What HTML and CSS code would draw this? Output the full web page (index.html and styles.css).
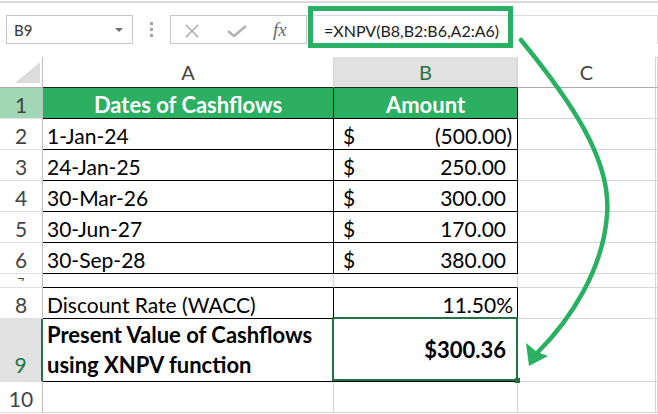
FILE: index.html
```html
<!DOCTYPE html>
<html lang="en">
<head>
<meta charset="utf-8">
<title>XNPV</title>
<link rel="stylesheet" href="styles.css">
</head>
<body>
<div class="app">
  <div class="ribbon-edge"></div>
  <div class="fbar">
    <div class="namebox"><span class="ref">B9</span><span class="caret"></span></div>
    <div class="grip"><i></i><i></i><i></i></div>
    <div class="fbtns">
      <svg class="ico-x" width="14" height="14" viewBox="0 0 14 14"><path d="M1 1 L13 13 M13 1 L1 13" fill="none" stroke="#a3a3a3" stroke-width="1.4"/></svg>
      <svg class="ico-check" width="20" height="12" viewBox="0 0 20 12"><path d="M1 6 L7 11 L19 1" fill="none" stroke="#b3b3b3" stroke-width="2.6"/></svg>
      <span class="fx">fx</span>
    </div>
    <div class="finput">=XNPV(B8,B2:B6,A2:A6)</div>
  </div>

  <div class="sheet">
    <!-- header -->
    <div class="c ch corner"><svg width="26" height="22" viewBox="0 0 26 22"><path d="M0 21 L25 21 L25 0 Z" fill="#dcdcdc"/></svg></div>
    <div class="c ch edge">A</div>
    <div class="c ch edge sel">B</div>
    <div class="c ch">C</div>
    <div class="c ch"></div>

    <!-- row 1 -->
    <div class="c rh tint">1</div>
    <div class="c hd bk">Dates of Cashflows</div>
    <div class="c hd bk">Amount</div>
    <div class="c"></div>
    <div class="c"></div>

    <!-- row 2 -->
    <div class="c rh">2</div>
    <div class="c ta bk">1-Jan-24</div>
    <div class="c amt bk"><span>$</span><span class="neg">(500.00)</span></div>
    <div class="c"></div>
    <div class="c"></div>

    <!-- row 3 -->
    <div class="c rh">3</div>
    <div class="c ta bk">24-Jan-25</div>
    <div class="c amt bk"><span>$</span><span>250.00</span></div>
    <div class="c"></div>
    <div class="c"></div>

    <!-- row 4 -->
    <div class="c rh">4</div>
    <div class="c ta bk">30-Mar-26</div>
    <div class="c amt bk"><span>$</span><span>300.00</span></div>
    <div class="c"></div>
    <div class="c"></div>

    <!-- row 5 -->
    <div class="c rh">5</div>
    <div class="c ta bk">30-Jun-27</div>
    <div class="c amt bk"><span>$</span><span>170.00</span></div>
    <div class="c"></div>
    <div class="c"></div>

    <!-- row 6 -->
    <div class="c rh">6</div>
    <div class="c ta bk">30-Sep-28</div>
    <div class="c amt bk"><span>$</span><span>380.00</span></div>
    <div class="c"></div>
    <div class="c"></div>

    <!-- row 7 -->
    <div class="c rh short"><span>7</span></div>
    <div class="c bk-b"></div>
    <div class="c bk-b"></div>
    <div class="c"></div>
    <div class="c"></div>

    <!-- row 8 -->
    <div class="c rh">8</div>
    <div class="c ta bk">Discount Rate (WACC)</div>
    <div class="c pct bk">11.50%</div>
    <div class="c"></div>
    <div class="c"></div>

    <!-- row 9 -->
    <div class="c rh rsel">9</div>
    <div class="c ta two bk">Present Value of Cashflows<br>using XNPV function</div>
    <div class="c result bk">$300.36</div>
    <div class="c"></div>
    <div class="c"></div>

    <!-- row 10 -->
    <div class="c rh">10</div>
    <div class="c"></div>
    <div class="c"></div>
    <div class="c"></div>
    <div class="c"></div>
  </div>

  <div class="fx-callout"></div>
  <svg class="arrow" width="658" height="414" viewBox="0 0 658 414">
    <path d="M521 40 C570 100 612 160 607 215 C603 270 570 320 538 352" fill="none" stroke="#29b062" stroke-width="4.5" stroke-linecap="round"/>
    <path d="M529 366 L526 343 L537 352 L548 356 Z" fill="#29b062"/>
  </svg>
</div>
</body>
</html>
```

FILE: styles.css
```css
html, body {
  margin: 0;
  padding: 0;
  background: #ffffff;
}

.app {
  position: relative;
  width: 658px;
  height: 414px;
  overflow: hidden;
  font-family: "Lato", "Liberation Sans", sans-serif;
  color: #000;
}

.ribbon-edge {
  height: 2px;
  margin-top: 1px;
  background: #d9d9d9;
}

/* formula bar */
.fbar {
  display: flex;
  height: 29px;
  margin-top: 12px;
}

.namebox {
  box-sizing: border-box;
  width: 127px;
  margin-left: 6px;
  border: 1px solid #c6c6c6;
  display: flex;
  align-items: center;
  justify-content: space-between;
  padding: 0 9px 0 7px;
  font-size: 15px;
  color: #333;
}

.caret {
  width: 0;
  height: 0;
  border-left: 4px solid transparent;
  border-right: 4px solid transparent;
  border-top: 4px solid #6d6d6d;
}

.grip {
  width: 37px;
  display: flex;
  flex-direction: column;
  align-items: center;
  justify-content: center;
  gap: 3px;
}

.grip i {
  display: block;
  width: 3px;
  height: 3px;
  background: #a6a6a6;
}

.fbtns {
  box-sizing: border-box;
  width: 137px;
  border: 1px solid #c6c6c6;
  display: flex;
  align-items: center;
  padding-left: 14px;
}

.ico-x { margin-top: 2px; }
.ico-check { margin-left: 28px; margin-top: 3px; }

.fx {
  margin-left: 26px;
  font-family: "Liberation Serif", "DejaVu Serif", serif;
  font-style: italic;
  font-size: 19px;
  color: #6a6a6a;
}

.finput {
  flex: 1;
  box-sizing: border-box;
  border-top: 1px solid #dadada;
  border-right: 1px solid #dadada;
  display: flex;
  align-items: center;
  padding-left: 17px;
  font-size: 16px;
  color: #222;
}

/* sheet grid */
.sheet {
  display: grid;
  grid-template-columns: 43px 291px 184px 138px 1fr;
  grid-template-rows: 31px repeat(6, 31px) 14px 31px 63px 31px 1fr;
  margin-top: 13px;
  height: 357px;
  font-size: 21px;
}

.c {
  box-sizing: border-box;
  border-right: 1px solid #d4d4d4;
  border-bottom: 1px solid #d4d4d4;
  display: flex;
  align-items: flex-end;
  overflow: hidden;
  white-space: nowrap;
  line-height: 26px;
}

.ch {
  align-items: center;
  justify-content: center;
  font-size: 20px;
  color: #444;
  border-bottom-color: #ababab;
  border-right-color: #d4d4d4;
}

.ch.edge { border-bottom-color: #222; }

.ch.sel {
  background: #e1e1e1;
  color: #217346;
}

.corner {
  justify-content: flex-end;
  align-items: flex-end;
  padding: 0 1px 3px 0;
  border-right-color: #bdbdbd;
}

.corner svg { display: block; }

.rh {
  justify-content: center;
  color: #444;
  border-right-color: #bdbdbd;
  border-bottom-color: #e1e1e1;
}

.rh.short {
  line-height: 13px;
  font-size: 12px;
}

.rh.short span {
  display: block;
  height: 6px;
  overflow: hidden;
  margin-bottom: 6px;
}

.rh.tint { background: #a2d7b6; }

.rh.rsel {
  background: #e1e1e1;
  color: #217346;
  border-right: 2px solid #217346;
  line-height: 30px;
  padding-bottom: 1px;
}

.bk {
  border-right-color: #000;
  border-bottom-color: #000;
}

.bk-b { border-bottom-color: #000; }

.hd {
  background: #2bb061;
  color: #fff;
  font-weight: 700;
  font-size: 22px;
  justify-content: center;
}

.ta { padding-left: 4px; }

.two {
  white-space: normal;
  font-weight: 700;
  font-size: 22px;
  line-height: 30px;
  padding-bottom: 1px;
}

.amt {
  justify-content: space-between;
  padding: 0 11px 0 9px;
}

.amt .neg { margin-right: -6px; }

.pct {
  justify-content: flex-end;
  padding-right: 4px;
}

.result {
  position: relative;
  overflow: visible;
  align-items: center;
  justify-content: flex-end;
  padding-right: 11px;
  font-weight: 700;
  font-size: 22px;
}

.result::after {
  content: "";
  position: absolute;
  top: -2px;
  left: -2px;
  right: -1px;
  bottom: 0;
  border: 2px solid #217346;
}

.result::before {
  content: "";
  position: absolute;
  right: -3px;
  bottom: -2px;
  width: 5px;
  height: 5px;
  background: #217346;
  z-index: 1;
}

/* annotations */
.fx-callout {
  position: absolute;
  left: 308px;
  top: 6px;
  width: 205px;
  height: 42px;
  box-sizing: border-box;
  border: 5px solid #29b062;
}

.arrow {
  position: absolute;
  left: 0;
  top: 0;
  pointer-events: none;
}
```
